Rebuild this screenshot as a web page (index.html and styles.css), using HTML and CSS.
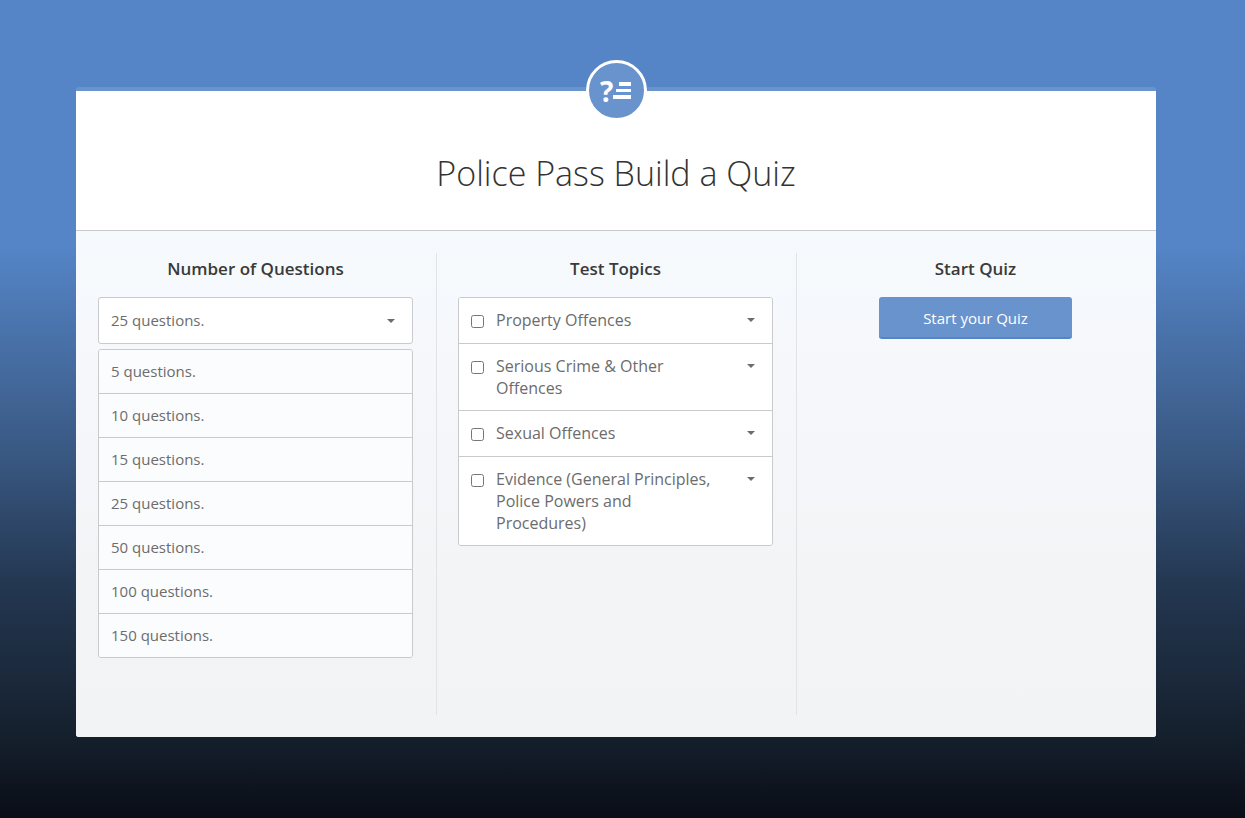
FILE: index.html
```html
<!DOCTYPE html>
<html lang="en">
<head>
  <meta charset="UTF-8" />
  <meta name="viewport" content="width=device-width, initial-scale=1.0"/>
  <title>Police Pass Build a Quiz</title>
  <link rel="stylesheet" href="styles.css">
</head>
<body>
  <main class="container">
    <header class="quiz-header">
      <div class="badge">
        <svg width="32" height="48" viewBox="0 0 32 48" fill="#fff" aria-hidden="true">
          <text class="badge-mark" x="0" y="35">?</text>
          <rect x="19" y="15" width="12" height="4"/>
          <rect x="16" y="22" width="15" height="3"/>
          <rect x="13" y="28" width="18" height="4"/>
        </svg>
      </div>
      <h1>Police Pass Build a Quiz</h1>
    </header>

    <form class="quiz-form" onsubmit="return false">
      <section class="column">
        <h2><label for="questionCount">Number of Questions</label></h2>
        <div class="select-box">
          <select id="questionCount">
            <option>5 questions.</option>
            <option>10 questions.</option>
            <option>15 questions.</option>
            <option selected>25 questions.</option>
            <option>50 questions.</option>
            <option>100 questions.</option>
            <option>150 questions.</option>
          </select>
          <svg class="arrow" width="8" height="4" viewBox="0 0 8 4"><path d="M0 0h8L4 4z"/></svg>
        </div>
        <ul class="count-list" id="countList">
          <li><button type="button">5 questions.</button></li>
          <li><button type="button">10 questions.</button></li>
          <li><button type="button">15 questions.</button></li>
          <li><button type="button">25 questions.</button></li>
          <li><button type="button">50 questions.</button></li>
          <li><button type="button">100 questions.</button></li>
          <li><button type="button">150 questions.</button></li>
        </ul>
      </section>

      <section class="column">
        <h2>Test Topics</h2>
        <ul class="topic-list">
          <li>
            <input type="checkbox" id="property">
            <label for="property">Property Offences</label>
            <button type="button" class="toggle" aria-label="Show property topics"><svg class="arrow" width="8" height="4" viewBox="0 0 8 4"><path d="M0 0h8L4 4z"/></svg></button>
          </li>
          <li>
            <input type="checkbox" id="serious">
            <label for="serious">Serious Crime &amp; Other Offences</label>
            <button type="button" class="toggle" aria-label="Show serious crime topics"><svg class="arrow" width="8" height="4" viewBox="0 0 8 4"><path d="M0 0h8L4 4z"/></svg></button>
          </li>
          <li>
            <input type="checkbox" id="sexual">
            <label for="sexual">Sexual Offences</label>
            <button type="button" class="toggle" aria-label="Show sexual offence topics"><svg class="arrow" width="8" height="4" viewBox="0 0 8 4"><path d="M0 0h8L4 4z"/></svg></button>
          </li>
          <li>
            <input type="checkbox" id="evidence">
            <label for="evidence">Evidence (General Principles, Police Powers and Procedures)</label>
            <button type="button" class="toggle" aria-label="Show evidence topics"><svg class="arrow" width="8" height="4" viewBox="0 0 8 4"><path d="M0 0h8L4 4z"/></svg></button>
          </li>
        </ul>
      </section>

      <section class="column">
        <h2>Start Quiz</h2>
        <button type="submit" class="start-button">Start your Quiz</button>
      </section>
    </form>
  </main>

  <script>
    const select = document.getElementById('questionCount');

    document.querySelectorAll('#countList button').forEach((button, i) => {
      button.addEventListener('click', () => {
        select.selectedIndex = i;
      });
    });
  </script>
</body>
</html>
```
FILE: styles.css
```css
* {
  box-sizing: border-box;
}

body {
  font-family: "Open Sans", "Noto Sans", sans-serif;
  font-size: 16px;
  color: #6c6c6c;
  margin: 0;
  padding: 87px 13px 80px 0;
  min-height: 100vh;
  background: linear-gradient(#5585c7 30%, #3b5b87 54%, #243852 71%, #15202d 90%, #090d16) no-repeat;
}

button,
select {
  font-family: inherit;
  color: inherit;
  cursor: pointer;
}

.container {
  max-width: 1080px;
  margin: 0 auto;
  border-top: 4px solid #6993cd;
  border-radius: 3px;
  background-color: white;
}

.quiz-header {
  display: flex;
  flex-direction: column;
  align-items: center;
  padding-bottom: 32px;
  border-bottom: 1px solid #c8cacc;
}

.badge {
  display: flex;
  align-items: center;
  justify-content: center;
  width: 61px;
  height: 61px;
  margin-top: -31px;
  border: 3px solid white;
  border-radius: 50%;
  background-color: #6993cd;
}

.badge-mark {
  font-size: 28px;
  font-weight: 700;
}

h1 {
  margin: 27px 0 0;
  font-size: 34px;
  font-weight: 300;
  line-height: 50px;
  color: #333;
}

.quiz-form {
  display: grid;
  grid-template-columns: repeat(3, 1fr);
  padding: 22px 0;
  border-radius: 0 0 3px 3px;
  background: linear-gradient(#f5fafd, #f6f8fc 20%, #f3f4f6 70%, #f2f3f5);
}

.column {
  padding: 0 23px 57px 22px;
}

.column + .column {
  padding-left: 21px;
  border-left: 1px solid #e1e4e7;
}

h2 {
  margin: 0 0 12px;
  font-size: 17px;
  font-weight: 600;
  line-height: 32px;
  text-align: center;
  color: #3a3a3a;
}

.select-box {
  display: flex;
  align-items: center;
  margin-bottom: 5px;
}

.select-box select {
  flex: 1;
  height: 47px;
  padding: 0 12px 2px;
  border: 1px solid #c8cacc;
  border-radius: 3px;
  background-color: white;
  font-size: 15px;
  appearance: none;
}

.select-box .arrow {
  margin-left: -26px;
  margin-right: 18px;
  pointer-events: none;
}

.arrow {
  display: block;
  fill: #6c6c6c;
}

.count-list,
.topic-list {
  list-style: none;
  margin: 0;
  padding: 0;
  border: 1px solid #c8cacc;
  border-radius: 3px;
  overflow: hidden;
}

li + li {
  border-top: 1px solid #c8cacc;
}

.count-list button {
  display: block;
  width: 100%;
  height: 43px;
  padding: 0 12px 2px;
  border: none;
  background-color: #fbfcfe;
  font-size: 15px;
  text-align: left;
}

.count-list button:hover {
  background-color: white;
}

.topic-list li {
  display: flex;
  align-items: flex-start;
  background-color: white;
}

.topic-list input {
  width: 13px;
  height: 13px;
  margin: 17px 0 0 12px;
}

.topic-list label {
  flex: 1;
  min-height: 45px;
  padding: 11px 12px;
  line-height: 22px;
}

.toggle {
  padding: 20px 17px;
  border: none;
  background: none;
}

.start-button {
  display: block;
  height: 42px;
  margin: 0 auto;
  padding: 2px 44px 0;
  border: none;
  border-bottom: 2px solid #5585c7;
  border-radius: 3px;
  background-color: #6993cd;
  color: white;
  font-size: 15px;
}

.start-button:hover {
  background-color: #5585c7;
}

@media (max-width: 800px) {
  .quiz-form {
    grid-template-columns: 1fr;
  }

  .column + .column {
    border-left: none;
  }
}
```
